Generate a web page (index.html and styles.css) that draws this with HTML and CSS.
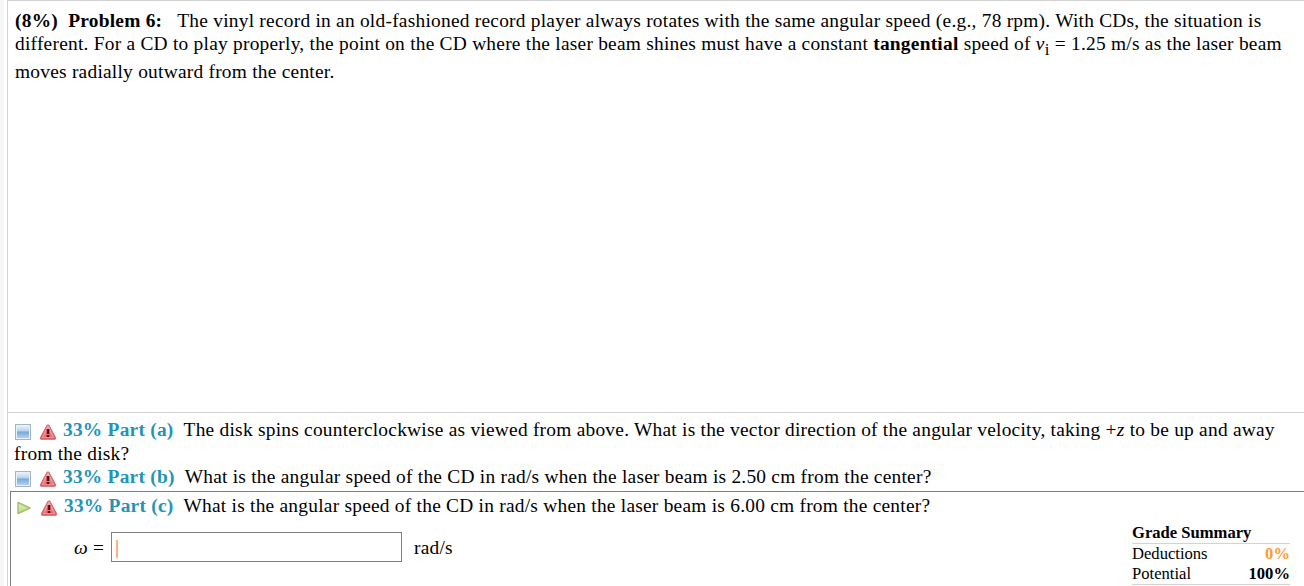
FILE: index.html
```html
<!DOCTYPE html>
<html lang="en">

<head>
    <meta charset="utf-8">
    <title>Problem 6</title>
    <link rel="stylesheet" href="styles.css">
</head>

<body>
    <svg class="defs" width="0" height="0">
        <defs>
            <linearGradient id="blue" x1="0" y1="0" x2="0" y2="1">
                <stop offset="0" stop-color="#e6f0fa" />
                <stop offset="0.4" stop-color="#b8d3ee" />
                <stop offset="0.5" stop-color="#78a9da" />
                <stop offset="1" stop-color="#b4d2f0" />
            </linearGradient>
            <linearGradient id="red" x1="0" y1="0" x2="0" y2="1">
                <stop offset="0" stop-color="#f0a8a8" />
                <stop offset="1" stop-color="#e2606a" />
            </linearGradient>
            <linearGradient id="green" x1="0" y1="0" x2="0" y2="1">
                <stop offset="0" stop-color="#e4f2bd" />
                <stop offset="1" stop-color="#b4dc70" />
            </linearGradient>
            <symbol id="box" viewBox="0 0 16 16">
                <rect x="0.5" y="0.5" width="15" height="15" fill="#e9f0f6" stroke="#a3b6c8" />
                <rect x="2" y="2" width="12" height="12" fill="url(#blue)" />
            </symbol>
            <symbol id="warning" viewBox="0 0 16 16">
                <path d="M7.2 1h1.6L15.3 13.2v2H0.7v-2z" fill="url(#red)" stroke="#d4545c" stroke-linejoin="round" />
                <path d="M8 3L13.6 13.6H2.4z" fill="none" stroke="#f5b5b8" stroke-width="0.6" />
                <path d="M6.5 5h3v5h-3zM6.5 11h3v2h-3z" fill="#b02a34" />
                <path d="M7.2 5h1.8v5H7.2zM7.2 11h1.8v2H7.2z" fill="#4a1014" />
            </symbol>
            <symbol id="play" viewBox="0 0 14 14">
                <path d="M1 1.5L13 7L1 12.5z" fill="url(#green)" stroke="#a3bf75" stroke-width="1.4" stroke-linejoin="round" />
            </symbol>
        </defs>
    </svg>

    <div class="problem">
        <div class="statement">
            <div class="line first"><b class="heading">(8%)&nbsp; Problem 6:</b>The vinyl record in an old-fashioned record player always rotates with the same angular speed (e.g., 78 rpm). With CDs, the situation is</div>
            <div class="line second">different. For a CD to play properly, the point on the CD where the laser beam shines must have a constant <b>tangential</b> speed of <i>v</i><sub>i</sub> = 1.25 m/s as the laser beam</div>
            <div class="line third">moves radially outward from the center.</div>
        </div>

        <div class="parts">
            <div class="part">
                <svg class="icon"><use href="#box" /></svg>
                <svg class="icon"><use href="#warning" /></svg>
                <span class="label">33% Part (a)</span>
                <span class="question">The disk spins counterclockwise as viewed from above. What is the vector direction of the angular velocity, taking +<i>z</i> to be up and away</span>
            </div>
            <div class="rest">from the disk?</div>
            <div class="part">
                <svg class="icon"><use href="#box" /></svg>
                <svg class="icon"><use href="#warning" /></svg>
                <span class="label">33% Part (b)</span>
                <span class="question">What is the angular speed of the CD in rad/s when the laser beam is 2.50 cm from the center?</span>
            </div>
        </div>

        <div class="active">
            <div class="part">
                <svg class="icon play"><use href="#play" /></svg>
                <svg class="icon"><use href="#warning" /></svg>
                <span class="label">33% Part (c)</span>
                <span class="question">What is the angular speed of the CD in rad/s when the laser beam is 6.00 cm from the center?</span>
            </div>
            <div class="work">
                <div class="answer">
                    <span class="variable"><i>ω</i> =</span>
                    <div class="field"><span class="caret"></span></div>
                    <span class="unit">rad/s</span>
                </div>
                <div class="grade">
                    <div class="row"><b>Grade Summary</b></div>
                    <div class="row deductions"><span>Deductions</span><b class="lost">0%</b></div>
                    <div class="row potential"><span>Potential</span><b>100%</b></div>
                </div>
            </div>
        </div>
    </div>
</body>

</html>
```
FILE: styles.css
```css
* {
    box-sizing: border-box;
}

body {
    margin: 0;
    height: 586px;
    overflow: hidden;
    background: linear-gradient(90deg, #f7f7f7 4px, #fff 4px);
    font-family: "Liberation Serif", "Times New Roman", serif;
    font-size: 19.4px;
    line-height: 24px;
    letter-spacing: 0.24px;
    color: #000;
}

.defs {
    position: absolute;
}

.problem {
    margin-left: 7px;
    height: 586px;
    border-top: 1px solid #d3d3d3;
    border-left: 1px solid #d3d3d3;
}

.statement {
    height: 412px;
    padding: 8px 0 0 7px;
    border-bottom: 1px solid #d3d3d3;
}

.line {
    height: 24px;
    white-space: nowrap;
}

.first {
    height: 23px;
}

.third {
    margin-top: 4px;
}

.heading {
    margin-right: 15px;
}

sub {
    font-size: 17px;
    line-height: 0;
    vertical-align: -5px;
}

.parts {
    height: 78px;
    padding: 5px 0 0 6px;
}

.part {
    display: flex;
    height: 24px;
    white-space: nowrap;
}

.icon {
    flex: none;
    width: 16px;
    height: 16px;
    margin: 6px 9px 0 1px;
}

.icon + .icon {
    margin: 6px 7px 0 0;
}

.label {
    margin-right: 10px;
    color: #2394b8;
    font-weight: bold;
}

.rest {
    height: 23px;
}

.active {
    height: 95px;
    margin-left: 2px;
    padding: 2px 0 0 6px;
    border-top: 1px solid #808080;
    border-left: 1px solid #808080;
}

.active .play {
    width: 14px;
    height: 14px;
    margin: 7px 10px 0 0;
}

.work {
    display: flex;
    justify-content: space-between;
}

.answer {
    display: flex;
    margin: 14px 0 0 57px;
}

.variable {
    width: 37px;
    padding-top: 4px;
}

.field {
    width: 291px;
    height: 30px;
    padding: 7px 0 0 4px;
    border: 1px solid #808080;
}

.caret {
    display: block;
    width: 2px;
    height: 18px;
    background: #ffb37a;
}

.unit {
    margin-left: 12px;
    padding-top: 4px;
}

.grade {
    width: 158px;
    margin: 5px 14px 0 0;
    font-size: 16.6px;
    line-height: 20px;
    letter-spacing: 0;
}

.row {
    display: flex;
    justify-content: space-between;
    height: 21px;
    border-bottom: 1px solid #d3d3d3;
}

.deductions {
    height: 20px;
    border-bottom: none;
}

.potential {
    height: 21px;
}

.lost {
    color: #ff9a2e;
}
```
